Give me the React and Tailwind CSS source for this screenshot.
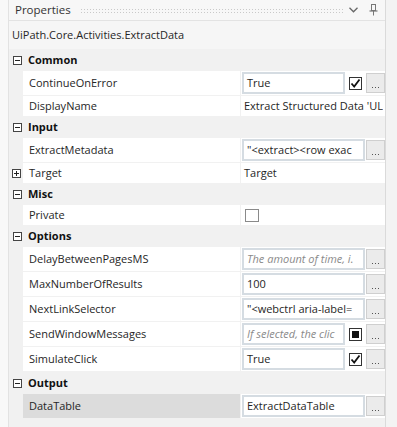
const rows = [
  { type: 'cat', name: 'Common' },
  { type: 'prop', name: 'ContinueOnError', h: 'h-[24px] mb-px', editor: { kind: 'box', text: 'True', check: 'checked' } },
  { type: 'prop', name: 'DisplayName', h: 'h-[20px]', editor: { kind: 'plain', text: "Extract Structured Data 'UL" } },
  { type: 'cat', name: 'Input' },
  { type: 'prop', name: 'ExtractMetadata', h: 'h-[24px] mb-px', editor: { kind: 'box', text: '"<extract><row exac' } },
  { type: 'prop', name: 'Target', h: 'h-[20px]', plus: true, editor: { kind: 'plain', text: 'Target' } },
  { type: 'cat', name: 'Misc' },
  { type: 'prop', name: 'Private', h: 'h-[20px]', editor: { kind: 'check' } },
  { type: 'cat', name: 'Options' },
  { type: 'prop', name: 'DelayBetweenPagesMS', h: 'h-[24px] mb-px', editor: { kind: 'box', text: 'The amount of time, i.', hint: true } },
  { type: 'prop', name: 'MaxNumberOfResults', h: 'h-[24px] mb-px', editor: { kind: 'box', text: '100' } },
  { type: 'prop', name: 'NextLinkSelector', h: 'h-[24px] mb-px', editor: { kind: 'box', text: '"<webctrl aria-label=' } },
  { type: 'prop', name: 'SendWindowMessages', h: 'h-[24px] mb-px', editor: { kind: 'box', text: 'If selected, the clic', hint: true, check: 'mixed' } },
  { type: 'prop', name: 'SimulateClick', h: 'h-[24px] mb-px', editor: { kind: 'box', text: 'True', check: 'checked' } },
  { type: 'cat', name: 'Output' },
  { type: 'prop', name: 'DataTable', h: 'h-[24px] mb-px', selected: true, editor: { kind: 'box', text: 'ExtractDataTable' } },
]

function Expander({ plus }) {
  return (
    <svg width="9" height="9" viewBox="0 0 9 9" className="shrink-0">
      <rect x="0.5" y="0.5" width="8" height="8" fill="white" stroke="#444" />
      <line x1="2" y1="4.5" x2="7" y2="4.5" stroke="#222" />
      {plus && <line x1="4.5" y1="2" x2="4.5" y2="7" stroke="#222" />}
    </svg>
  )
}

function DotsButton() {
  return (
    <div className="ml-[4px] flex h-[20px] w-[19px] shrink-0 items-end justify-center gap-[2px] border border-[#cfcfcf] bg-[#ebebeb] pb-[4px]">
      <span className="h-px w-px bg-[#555]" />
      <span className="h-px w-px bg-[#555]" />
      <span className="h-px w-px bg-[#555]" />
    </div>
  )
}

function CheckBox({ state }) {
  return (
    <div className="ml-[4px] flex h-[13px] w-[13px] shrink-0 items-center justify-center border border-[#333] bg-white">
      {state === 'checked' && (
        <svg width="11" height="11" viewBox="0 0 11 11">
          <polyline points="1.5,5.5 4.2,8.5 9.5,1.5" fill="none" stroke="#111" strokeWidth="1.8" />
        </svg>
      )}
      {state === 'mixed' && <div className="h-[7px] w-[7px] bg-[#111]" />}
    </div>
  )
}

function Editor({ editor }) {
  if (editor.kind === 'plain') {
    return <span className="overflow-hidden whitespace-nowrap pl-[3px] text-[#1f1f1f]">{editor.text}</span>
  }
  if (editor.kind === 'check') {
    return <div className="ml-[4px] h-[13px] w-[14px] border border-[#8a8a8a] bg-white" />
  }
  return (
    <div className="flex items-center pl-px">
      <div
        className={`flex h-[22px] shrink-0 items-center overflow-hidden whitespace-nowrap border-2 border-[#d5dce2] bg-white px-[3px] ${editor.check ? 'w-[103px]' : 'w-[123px]'} ${editor.hint ? 'italic text-[#8a8a8a]' : 'text-[#1f1f1f]'}`}
      >
        {editor.text}
      </div>
      {editor.check ? <CheckBox state={editor.check} /> : null}
      {editor.check ? <DotsButton /> : <div className="-ml-[3px]"><DotsButton /></div>}
    </div>
  )
}

export default function App() {
  return (
    <div className="flex h-[427px] w-[397px] overflow-hidden bg-[#f6f6f6] font-['Open_Sans',sans-serif] text-[11px] text-[#262626]">
      <div className="w-[9px] shrink-0 border-r border-[#e2e2e2] bg-[#f8f8f8]" />
      <div className="flex w-[376px] shrink-0 flex-col bg-[#f1f1f1]">
        <div className="flex h-[21px] shrink-0 items-center border-b border-[#e3e3e3] bg-[#f7f7f7] pl-[6px] pr-[6px]">
          <span className="text-[11.5px] text-[#333]">Properties</span>
          <div className="ml-[9px] h-[5px] flex-1 bg-[radial-gradient(circle,#c9c9c9_0.7px,transparent_0.9px)] bg-[length:3px_3px]" />
          <svg width="9" height="6" viewBox="0 0 9 6" className="ml-[5px]">
            <polyline points="0.5,0.8 4.5,4.8 8.5,0.8" fill="none" stroke="#666" strokeWidth="1.3" />
          </svg>
          <svg width="9" height="12" viewBox="0 0 9 12" className="ml-[11px] mr-[1px]">
            <rect x="2.5" y="0.5" width="4" height="6" fill="none" stroke="#777" />
            <line x1="0.5" y1="7" x2="8.5" y2="7" stroke="#777" strokeWidth="1.2" />
            <line x1="4.5" y1="7" x2="4.5" y2="11.5" stroke="#777" />
          </svg>
        </div>
        <div className="flex h-[28px] shrink-0 items-center bg-[#f6f6f6] pl-[3px] text-[11px] text-[#262626]">
          UiPath.Core.Activities.ExtractData
        </div>
        {rows.map((row) =>
          row.type === 'cat' ? (
            <div key={row.name} className="flex h-[22px] shrink-0 items-center gap-[6px] pl-[4px]">
              <Expander />
              <span className="font-bold text-[#111]">{row.name}</span>
            </div>
          ) : (
            <div key={row.name} className={`flex shrink-0 ${row.h}`}>
              <div className="flex w-[14px] shrink-0 items-center pl-[3px]">
                {row.plus && <Expander plus />}
              </div>
              <div className={`flex w-[217px] shrink-0 items-center pl-[6px] ${row.selected ? 'bg-[#dcdcdc]' : 'bg-white'}`}>
                {row.name}
              </div>
              <div className="ml-px flex w-[144px] shrink-0 items-center overflow-hidden bg-white">
                <Editor editor={row.editor} />
              </div>
            </div>
          ),
        )}
      </div>
      <div className="flex-1 border-l border-[#dadada] bg-[#f3f3f3]" />
    </div>
  )
}
